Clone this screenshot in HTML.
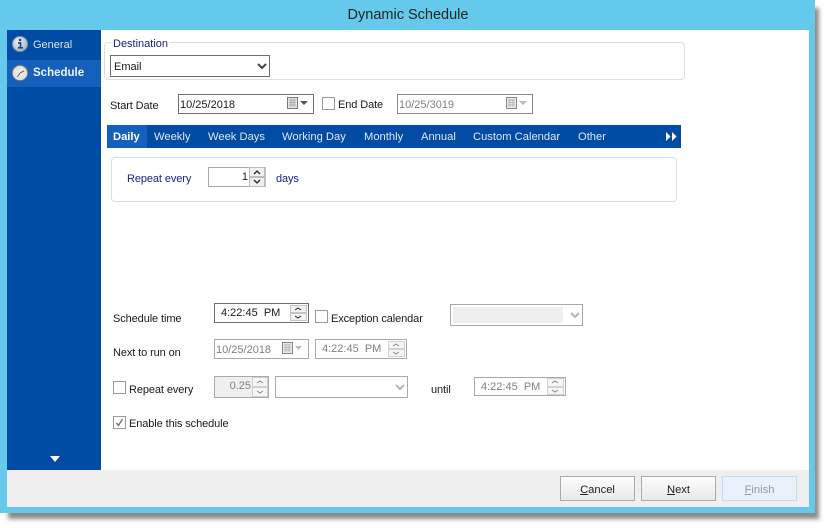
<!DOCTYPE html>
<html><head><meta charset="utf-8"><style>
html,body{margin:0;padding:0;background:#fff}
body{width:830px;height:528px;overflow:hidden;position:relative;font-family:"Liberation Sans",sans-serif;font-size:11px;color:#1a1a1a}
div,span,svg{position:absolute;box-sizing:border-box}
.t{white-space:nowrap;line-height:14px}
.l{letter-spacing:-.1px}
.tab{top:130px;color:#dfe9f6;font-size:11.2px;white-space:nowrap;line-height:14px}
.box{border:1px solid #a9a9a9;background:#fff}
.dk{border:1px solid #6e6e6e;background:#fff}
.gr{border:1px solid #d5dfe8;border-radius:4px;background:#fff}
.cb{width:13px;height:13px;border:1px solid #9a9a9a;background:#fff}
.btn{top:476px;width:75px;height:25px;border:1px solid #ababab;background:linear-gradient(#fdfdfd,#e9e9e9);text-align:center;line-height:26px;font-size:11.2px;color:#222}
.dis{color:#808080}
u{text-underline-offset:1px}
</style></head><body>
<div style="left:8px;top:8px;width:811px;height:511px;background:#8a8a8a;filter:blur(2px)"></div>
<div style="left:0;top:0;width:815px;height:513px;background:#65c9eb"></div>
<div style="left:7px;top:30px;width:802px;height:477px;background:#fff"></div>
<div class="t" style="left:0;top:7px;width:816px;text-align:center;font-size:14.500px;line-height:17px;color:#222">Dynamic Schedule</div>

<div style="left:7px;top:30px;width:94px;height:440px;background:#004ba3"></div>
<div style="left:7px;top:60px;width:94px;height:27px;background:#1560bd"></div>
<svg style="left:11px;top:35px" width="18" height="18" viewBox="0 0 18 18"><defs><radialGradient id="a" cx=".4" cy=".35" r=".7"><stop offset="0" stop-color="#f2f4f6"/><stop offset="1" stop-color="#9fb0c2"/></radialGradient></defs><circle cx="9" cy="9" r="7.500" fill="url(#a)" stroke="#7f93a8"/><path d="M7 8h2.500v4.500M7 12.800h5" stroke="#1c4a86" stroke-width="1.700" fill="none"/><circle cx="9" cy="5" r="1.300" fill="#1c4a86"/></svg>
<svg style="left:11px;top:64px" width="18" height="18" viewBox="0 0 18 18"><defs><radialGradient id="b" cx=".5" cy=".5" r=".6"><stop offset="0" stop-color="#f4f4f0"/><stop offset=".8" stop-color="#dcdcd6"/><stop offset="1" stop-color="#6f7a80"/></radialGradient></defs><circle cx="9" cy="9" r="7.800" fill="url(#b)" stroke="#5f6a72"/><path d="M9 9L13 7M9 9L6.500 13" stroke="#666" stroke-width="1" fill="none"/></svg>
<div class="t" style="left:33px;top:38px;color:#dbe6f3">General</div>
<div class="t" style="left:33px;top:66px;color:#eef4fb;font-weight:bold;font-size:11.500px">Schedule</div>
<svg style="left:50px;top:456px" width="10" height="6"><path d="M0 0H10L5 6Z" fill="#fff"/></svg>

<div class="gr" style="left:104px;top:42px;width:581px;height:38px"></div>
<div class="t" style="left:111px;top:37px;background:#fff;padding:0 2px;color:#1c1c80">Destination</div>
<div class="dk" style="left:110px;top:55px;width:160px;height:22px"></div>
<div class="t" style="left:114px;top:60px">Email</div>
<svg style="left:257px;top:63px" width="10" height="8"><path d="M1 1L5 5L9 1" stroke="#444" stroke-width="2" fill="none"/></svg>

<div class="t l" style="left:110px;top:99px">Start Date</div>
<div class="dk" style="left:178px;top:94px;width:136px;height:20px"></div>
<div class="t" style="left:180px;top:98px">10/25/2018</div>
<svg style="left:287px;top:97px" width="24" height="13"><rect x=".5" y=".5" width="10" height="11" fill="#e4e4e4" stroke="#777"/><path d="M2 3h7M2 5.500h7M2 8h7M4 2v8M7 2v8" stroke="#aaa"/><path d="M13 4h8l-4 4z" fill="#3f5a8a"/></svg>
<div class="cb" style="left:322px;top:97px"></div>
<div class="t l" style="left:338px;top:98px">End Date</div>
<div class="dk" style="left:397px;top:94px;width:136px;height:20px;border-color:#8a8a8a"></div>
<div class="t dis" style="left:399px;top:98px">10/25/3019</div>
<svg style="left:506px;top:97px" width="24" height="13"><rect x=".5" y=".5" width="10" height="11" fill="#e8e8e8" stroke="#888"/><path d="M2 3h7M2 5.500h7M2 8h7M4 2v8M7 2v8" stroke="#bbb"/><path d="M13 4h8l-4 4z" fill="#bcbcbc"/></svg>

<div style="left:107px;top:125px;width:574px;height:23px;background:#004ba3"></div>
<div style="left:107px;top:125px;width:40px;height:23px;background:#1560bd"></div>
<div class="tab" style="left:113px;color:#fff;font-weight:bold">Daily</div>
<div class="tab" style="left:154px">Weekly</div>
<div class="tab" style="left:208px">Week Days</div>
<div class="tab" style="left:282px">Working Day</div>
<div class="tab" style="left:364px">Monthly</div>
<div class="tab" style="left:421px">Annual</div>
<div class="tab" style="left:473px">Custom Calendar</div>
<div class="tab" style="left:578px">Other</div>
<svg style="left:666px;top:132px" width="11" height="9"><path d="M0 0L4.500 4.500L0 9ZM6 0L10.500 4.500L6 9Z" fill="#fff"/></svg>

<div class="gr" style="left:111px;top:157px;width:566px;height:45px"></div>
<div class="t l" style="left:127px;top:172px;color:#1c1c90">Repeat every</div>
<div class="box" style="left:208px;top:167px;width:58px;height:20px"></div>
<div class="t" style="left:200px;top:170px;width:48px;text-align:right">1</div>
<div style="left:249px;top:167px;width:17px;height:20px;background:#bdbdbd"></div>
<div style="left:250px;top:168px;width:14px;height:8px;background:#f0f0f0"></div>
<div style="left:250px;top:178px;width:14px;height:8px;background:#f0f0f0"></div>
<svg style="left:253px;top:170px" width="8" height="15"><path d="M1 4L4 1L7 4M1 10L4 13L7 10" stroke="#222" stroke-width="1.300" fill="none"/></svg>
<div class="t l" style="left:276px;top:172px;color:#1c1c90">days</div>

<div class="t l" style="left:113px;top:312px">Schedule time</div>
<div class="dk" style="left:214px;top:303px;width:95px;height:20px"></div>
<div class="t" style="left:221px;top:306px">4:22:45&nbsp; PM</div>
<div style="left:290px;top:305px;width:17px;height:16px;background:#c4c4c4"></div>
<div style="left:291px;top:306px;width:15px;height:6px;background:#f2f2f2"></div>
<div style="left:291px;top:314px;width:15px;height:6px;background:#f2f2f2"></div>
<svg style="left:294px;top:306px" width="8" height="14"><path d="M1 4L4 2L7 4M1 10L4 12L7 10" stroke="#222" fill="none"/></svg>
<div class="cb" style="left:315px;top:310px"></div>
<div class="t l" style="left:331px;top:312px">Exception calendar</div>
<div class="box" style="left:450px;top:304px;width:133px;height:22px"></div>
<div style="left:453px;top:307px;width:110px;height:16px;background:#efefef"></div>
<svg style="left:570px;top:312px" width="10" height="8"><path d="M1 1L5 5L9 1" stroke="#b5b5b5" stroke-width="2" fill="none"/></svg>

<div class="t l" style="left:113px;top:346px">Next to run on</div>
<div class="box" style="left:214px;top:339px;width:95px;height:20px"></div>
<div class="t dis" style="left:216px;top:343px">10/25/2018</div>
<svg style="left:282px;top:342px" width="24" height="13"><rect x=".5" y=".5" width="10" height="11" fill="#e8e8e8" stroke="#888"/><path d="M2 3h7M2 5.500h7M2 8h7M4 2v8M7 2v8" stroke="#bbb"/><path d="M13 4h7l-3.500 4z" fill="#bcbcbc"/></svg>
<div class="box" style="left:315px;top:339px;width:92px;height:20px"></div>
<div class="t dis" style="left:322px;top:342px">4:22:45&nbsp; PM</div>
<div style="left:388px;top:341px;width:17px;height:16px;background:#d2d2d2"></div>
<div style="left:389px;top:342px;width:15px;height:6px;background:#f5f5f5"></div>
<div style="left:389px;top:350px;width:15px;height:6px;background:#f5f5f5"></div>
<svg style="left:392px;top:342px" width="8" height="14"><path d="M1 4L4 2L7 4M1 10L4 12L7 10" stroke="#888" fill="none"/></svg>

<div class="cb" style="left:113px;top:381px"></div>
<div class="t l" style="left:129px;top:383px">Repeat every</div>
<div class="box" style="left:214px;top:376px;width:55px;height:22px;background:#efefef"></div>
<div class="t dis" style="left:216px;top:379px;width:35px;text-align:right">0.25</div>
<div style="left:252px;top:377px;width:16px;height:20px;background:#cfcfcf"></div>
<div style="left:253px;top:378px;width:14px;height:8px;background:#f5f5f5"></div>
<div style="left:253px;top:388px;width:14px;height:8px;background:#f5f5f5"></div>
<svg style="left:256px;top:379px" width="8" height="16"><path d="M1 4L4 2L7 4M1 12L4 14L7 12" stroke="#888" fill="none"/></svg>
<div class="box" style="left:275px;top:376px;width:133px;height:22px"></div>
<svg style="left:395px;top:384px" width="10" height="8"><path d="M1 1L5 5L9 1" stroke="#b5b5b5" stroke-width="2" fill="none"/></svg>
<div class="t l" style="left:431px;top:383px">until</div>
<div class="box" style="left:474px;top:377px;width:92px;height:19px"></div>
<div class="t dis" style="left:481px;top:380px">4:22:45&nbsp; PM</div>
<div style="left:547px;top:378px;width:17px;height:17px;background:#d2d2d2"></div>
<div style="left:548px;top:379px;width:15px;height:7px;background:#f5f5f5"></div>
<div style="left:548px;top:388px;width:15px;height:6px;background:#f5f5f5"></div>
<svg style="left:551px;top:379px" width="8" height="15"><path d="M1 4L4 2L7 4M1 11L4 13L7 11" stroke="#888" fill="none"/></svg>

<div class="cb" style="left:113px;top:416px"></div>
<svg style="left:114px;top:417px" width="11" height="11"><path d="M2.500 6L4.500 8.500L8.500 2" stroke="#777" stroke-width="1.500" fill="none"/></svg>
<div class="t l" style="left:129px;top:417px">Enable this schedule</div>

<div style="left:7px;top:470px;width:802px;height:37px;background:#efefef"></div>
<div class="btn" style="left:560px"><u>C</u>ancel</div>
<div class="btn" style="left:641px"><u>N</u>ext</div>
<div class="btn" style="left:722px;background:#e9f2fb;border-color:#c7daee;color:#8d9aa8"><u>F</u>inish</div>
</body></html>
